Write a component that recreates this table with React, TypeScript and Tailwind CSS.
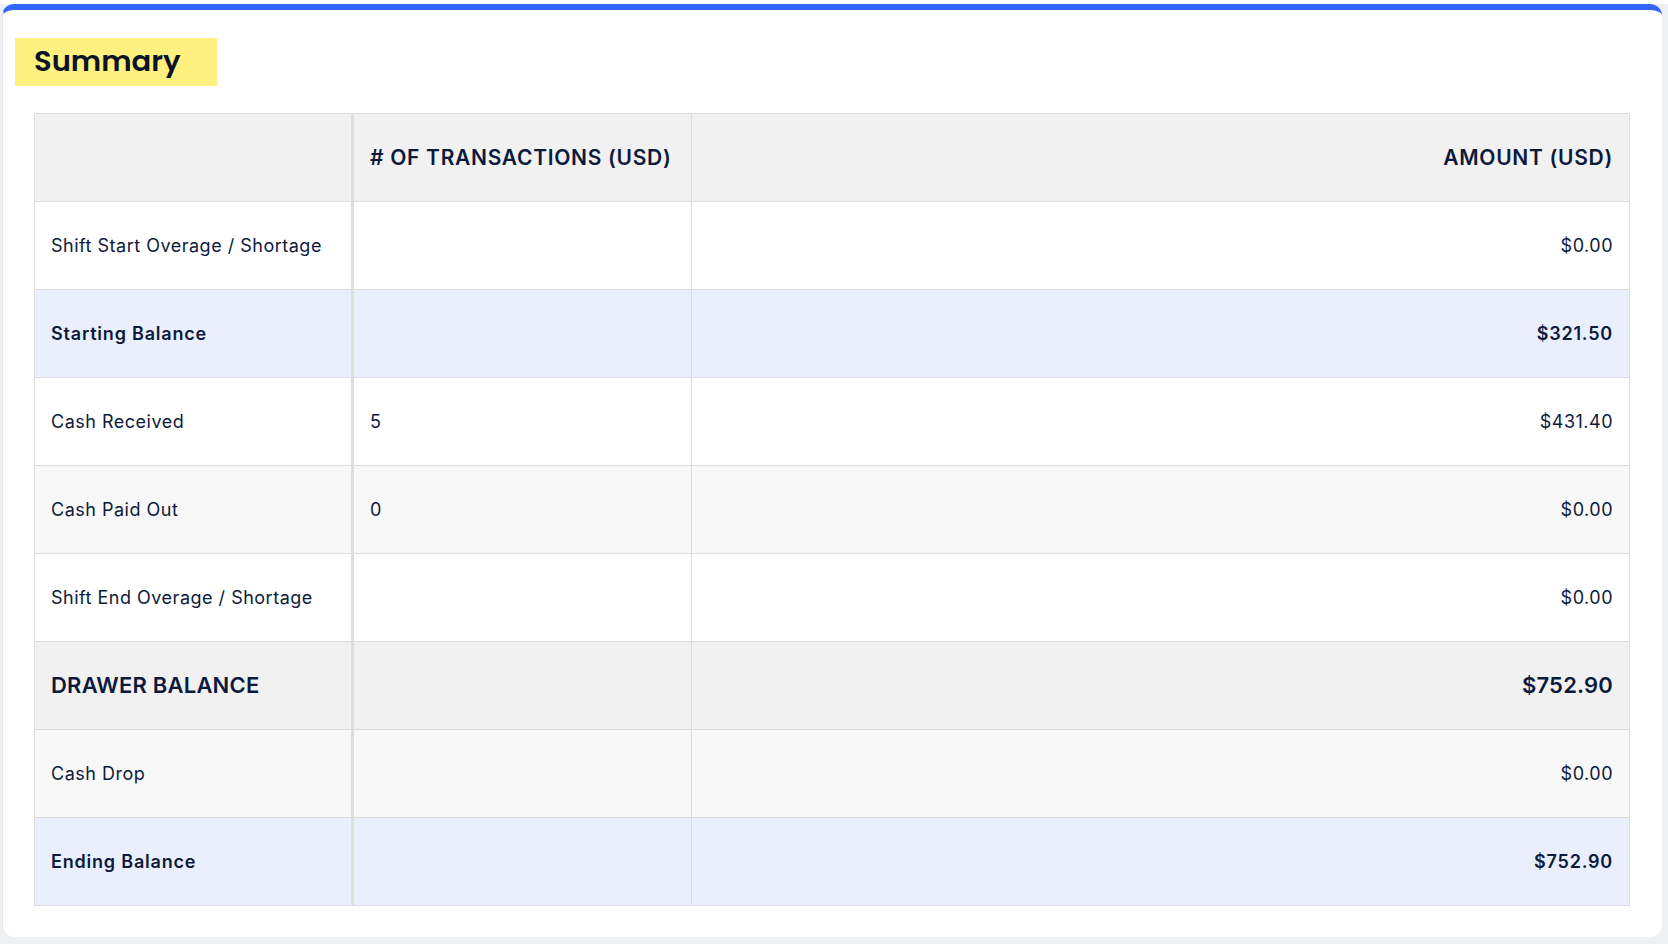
import React from 'react';

interface Row {
  label: string;
  count?: string;
  amount: string;
  kind: 'plain' | 'soft' | 'blue' | 'total';
}

const rows: Row[] = [
  { label: 'Shift Start Overage / Shortage', amount: '$0.00', kind: 'plain' },
  { label: 'Starting Balance', amount: '$321.50', kind: 'blue' },
  { label: 'Cash Received', count: '5', amount: '$431.40', kind: 'plain' },
  { label: 'Cash Paid Out', count: '0', amount: '$0.00', kind: 'soft' },
  { label: 'Shift End Overage / Shortage', amount: '$0.00', kind: 'plain' },
  { label: 'DRAWER BALANCE', amount: '$752.90', kind: 'total' },
  { label: 'Cash Drop', amount: '$0.00', kind: 'soft' },
  { label: 'Ending Balance', amount: '$752.90', kind: 'blue' },
];

const rowBg = {
  plain: 'bg-white',
  soft: 'bg-[#f8f8f8]',
  blue: 'bg-[#e9effc]',
  total: 'bg-[#f1f1f1]',
};

export default function App() {
  return (
    <main
      className="min-h-screen bg-[#eef0f3] border-t-4 border-white pl-[2px] pr-[6px] pb-[7px] text-[#0d1a3c]"
      style={{ fontFamily: 'Inter, "Liberation Sans", sans-serif' }}
    >
      <div className="bg-white rounded-xl border-t-[6px] border-[#3366ff] border-l border-l-[#e4e6ea] h-[933px]">
        <div className="pt-[28px] pl-[12px]">
          <h2
            className="inline-flex items-center w-[202px] h-[48px] pl-[19px] bg-[#fff080] text-[29px] font-semibold text-[#0a1424]"
            style={{ fontFamily: 'Poppins, "Open Sans", sans-serif' }}
          >
            Summary
          </h2>
        </div>

        {/* Summary table */}
        <div className="pl-[31px] pr-[32px] mt-[27px]">
          <table className="w-full table-fixed border-collapse border border-[#dcdcdc]">
            <colgroup>
              <col className="w-[318px]" />
              <col className="w-[339px]" />
              <col />
            </colgroup>
            <thead>
              <tr className="h-[88px] bg-[#f1f1f1]">
                <th className="border-r-[3px] border-[#dedede]" />
                <th className="border-r border-[#dcdcdc] px-4 text-left text-[21px] font-semibold tracking-[0.7px]">
                  # OF TRANSACTIONS (USD)
                </th>
                <th className="px-4 text-right text-[21px] font-semibold tracking-[0.7px]">AMOUNT (USD)</th>
              </tr>
            </thead>
            <tbody>
              {rows.map((row) => {
                const textCls =
                  row.kind === 'total'
                    ? 'text-[22px] font-semibold tracking-[0.2px]'
                    : row.kind === 'blue'
                    ? 'text-[18px] font-semibold tracking-[0.8px]'
                    : 'text-[18px] tracking-[0.5px]';
                return (
                  <tr key={row.label} className={`h-[88px] border-t border-[#dcdcdc] ${rowBg[row.kind]}`}>
                    <td className={`border-r-[3px] border-[#dedede] px-4 ${textCls}`}>{row.label}</td>
                    <td className="border-r border-[#dcdcdc] px-4 text-[18px] tracking-[0.5px]">{row.count}</td>
                    <td className={`px-4 text-right ${textCls}`}>{row.amount}</td>
                  </tr>
                );
              })}
            </tbody>
          </table>
        </div>
      </div>
    </main>
  );
}
